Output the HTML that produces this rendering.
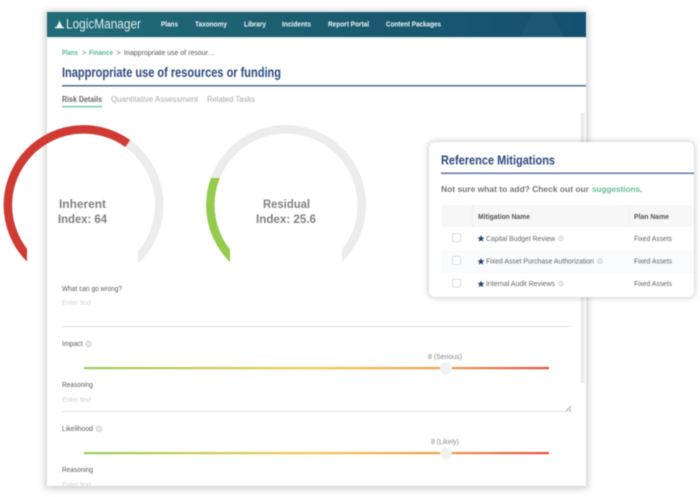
<!DOCTYPE html>
<html lang="en">
<head>
<meta charset="utf-8">
<title>LogicManager</title>
<style>
html,body{margin:0;padding:0;width:700px;height:497px;overflow:hidden;background:#fff}
#w{position:relative;width:700px;height:497px;filter:blur(.5px)}
#card{position:absolute;left:47px;top:12px;width:539px;height:474px;background:#fff;box-shadow:0 1px 7px 2px rgba(0,0,0,.2)}
#panel{position:absolute;left:429px;top:142px;width:265px;height:155px;background:#fff;border-radius:6px;box-shadow:0 0 6px 1px rgba(0,0,0,.2)}
svg{position:absolute;left:0;top:0}
text{font-family:"Liberation Sans",sans-serif}
</style>
</head>
<body>
<div id="w">
<div id="card"></div>
<svg width="700" height="497" viewBox="0 0 700 497" style="z-index:1">
<defs>
<linearGradient id="h" x1="0" x2="1" y1="0" y2="0"><stop offset="0" stop-color="#226c79"/><stop offset=".5" stop-color="#1b5d70"/><stop offset="1" stop-color="#135070"/></linearGradient>
<linearGradient id="s" x1="0" x2="1" y1="0" y2="0"><stop offset="0" stop-color="#9ccd56"/><stop offset=".5" stop-color="#f6c84f"/><stop offset=".78" stop-color="#f09a48"/><stop offset="1" stop-color="#e8493f"/></linearGradient>
<clipPath id="c"><rect x="47" y="12" width="539" height="474"/></clipPath>
<clipPath id="g1"><path d="M0 110H180V262H138V235H27V262H0z"/></clipPath>
<clipPath id="g2"><path d="M190 110H380V262H342V235H230V262H190z"/></clipPath>
<clipPath id="g3"><path d="M190 178H230V262H190z"/></clipPath>
<g id="i"><circle r="2.500" fill="none" stroke="#bbb" stroke-width=".9"/><circle r=".8" fill="#bbb"/></g>
</defs>
<rect x="47" y="12" width="539" height="25" fill="url(#h)"/>
<path d="M520 37L533 12h18l13 25z" fill="#fff" opacity=".035"/>
<rect x="47" y="37" width="539" height="1" fill="#dfe8ea"/>
<path d="M59.500 20.500l3 6.500h-6z" fill="#eef5f5"/><rect x="55" y="27" width="9" height="1.300" fill="#eef5f5"/>
<text x="66" y="28.500" font-size="13.500" fill="#dfecee" textLength="75" lengthAdjust="spacingAndGlyphs">LogicManager</text>
<g font-size="7" font-weight="700" fill="#f2f7f8">
<text x="161" y="26.500" textLength="17" lengthAdjust="spacingAndGlyphs">Plans</text>
<text x="195" y="26.500" textLength="32" lengthAdjust="spacingAndGlyphs">Taxonomy</text>
<text x="244" y="26.500" textLength="22" lengthAdjust="spacingAndGlyphs">Library</text>
<text x="282" y="26.500" textLength="29" lengthAdjust="spacingAndGlyphs">Incidents</text>
<text x="328" y="26.500" textLength="41" lengthAdjust="spacingAndGlyphs">Report Portal</text>
<text x="386" y="26.500" textLength="55" lengthAdjust="spacingAndGlyphs">Content Packages</text>
</g>
<g font-size="7.500">
<text x="62" y="55" fill="#55bb95" font-weight="700" textLength="16" lengthAdjust="spacingAndGlyphs">Plans</text>
<text x="82" y="55" fill="#777">&gt;</text>
<text x="89" y="55" fill="#55bb95" font-weight="700" textLength="24" lengthAdjust="spacingAndGlyphs">Finance</text>
<text x="116.500" y="55" fill="#777">&gt;</text>
<text x="124" y="55" fill="#555" textLength="91" lengthAdjust="spacingAndGlyphs">Inappropriate use of resour…</text>
</g>
<text x="62" y="77" font-size="13.500" font-weight="700" fill="#2c4a7c" textLength="219" lengthAdjust="spacingAndGlyphs">Inappropriate use of resources or funding</text>
<rect x="62" y="85" width="524" height="1.500" fill="#4a6a9a"/>
<text x="62" y="102" font-size="8" font-weight="700" fill="#666" textLength="40" lengthAdjust="spacingAndGlyphs">Risk Details</text>
<text x="111" y="102" font-size="8" fill="#aaa" textLength="87" lengthAdjust="spacingAndGlyphs">Quantitative Assessment</text>
<text x="207" y="102" font-size="8" fill="#aaa" textLength="48" lengthAdjust="spacingAndGlyphs">Related Tasks</text>
<rect x="62" y="106" width="40" height="1.300" fill="#5fc29f"/>
<rect x="580.500" y="113" width="4" height="270" fill="#ececec"/>

<g fill="none" stroke-width="8.500">
<g clip-path="url(#g1)">
<circle cx="83.500" cy="205" r="75.750" stroke="#ececec"/>
<path d="M33.500 261.900A75.750 75.750 0 0 1 127.700 143.500" stroke="#cf3a33"/>
</g>
<g clip-path="url(#g2)">
<circle cx="286" cy="205" r="75.750" stroke="#ececec"/>
</g>
<g clip-path="url(#g3)">
<path d="M236 261.900A75.750 75.750 0 0 1 218.800 170.300" stroke="#95cb4d"/>
</g>
</g>
<g font-size="12" font-weight="700" fill="#808080">
<text x="59" y="208" textLength="47" lengthAdjust="spacingAndGlyphs">Inherent</text>
<text x="58" y="223" textLength="49" lengthAdjust="spacingAndGlyphs">Index: 64</text>
<text x="263" y="208" textLength="47" lengthAdjust="spacingAndGlyphs">Residual</text>
<text x="256" y="223" textLength="60" lengthAdjust="spacingAndGlyphs">Index: 25.6</text>
</g>

<g clip-path="url(#c)">
<g font-size="7.500" fill="#5c5c5c">
<text x="62" y="291" textLength="60" lengthAdjust="spacingAndGlyphs">What can go wrong?</text>
<text x="62" y="346" textLength="21" lengthAdjust="spacingAndGlyphs">Impact</text>
<text x="62" y="387" textLength="31" lengthAdjust="spacingAndGlyphs">Reasoning</text>
<text x="62" y="431" textLength="31" lengthAdjust="spacingAndGlyphs">Likelihood</text>
<text x="62" y="472" textLength="31" lengthAdjust="spacingAndGlyphs">Reasoning</text>
<text x="428" y="359" fill="#888" textLength="34" lengthAdjust="spacingAndGlyphs">8 (Serious)</text>
<text x="431" y="444" fill="#888" textLength="28" lengthAdjust="spacingAndGlyphs">8 (Likely)</text>
</g>
<g font-size="7.500" fill="#d0d0d0">
<text x="62" y="305" textLength="29" lengthAdjust="spacingAndGlyphs">Enter text</text>
<text x="62" y="402" textLength="29" lengthAdjust="spacingAndGlyphs">Enter text</text>
<text x="62" y="487" textLength="29" lengthAdjust="spacingAndGlyphs">Enter text</text>
</g>
<use href="#i" x="88.500" y="344"/>
<use href="#i" x="99" y="429"/>
<rect x="62" y="326" width="510" height="1" fill="#e4e4e4"/>
<rect x="62" y="411" width="510" height="1" fill="#e4e4e4"/>
<path d="M566 411l5-5M569 411l2-2" stroke="#888" stroke-width=".7"/>
<rect x="84" y="367" width="465" height="2.200" fill="url(#s)"/>
<rect x="84" y="452" width="465" height="2.200" fill="url(#s)"/>
<circle cx="446" cy="368.500" r="6" fill="#f1f1f1"/>
<circle cx="446" cy="453.500" r="6" fill="#f1f1f1"/>
</g>
</svg>
<div id="panel" style="z-index:2"></div>
<svg width="700" height="497" viewBox="0 0 700 497" style="z-index:3">
<defs>
<g id="st"><path d="M0-3.400l1 2.300h2.500L1.600.5l.7 2.600L0 1.700-2.300 3.100l.7-2.600L-3.500-1.100H-1z" fill="#24407a"/></g>
<g id="j"><circle r="2.200" fill="none" stroke="#c4c4c4" stroke-width=".8"/><circle r=".7" fill="#c4c4c4"/></g>
</defs>
<text x="441" y="164.500" font-size="12.500" font-weight="700" fill="#2c4a7c" textLength="114" lengthAdjust="spacingAndGlyphs">Reference Mitigations</text>
<rect x="441" y="172.500" width="253" height="1.500" fill="#5a78a6"/>
<text x="441" y="192" font-size="8.500" font-weight="700" fill="#777" textLength="148" lengthAdjust="spacingAndGlyphs">Not sure what to add? Check out our</text>
<text x="592" y="192" font-size="8.500" font-weight="700" fill="#66bd98" textLength="48" lengthAdjust="spacingAndGlyphs">suggestions</text>
<text x="640" y="192" font-size="8.500" font-weight="700" fill="#777">.</text>
<rect x="441" y="205" width="253" height="22" fill="#f7f7f7"/>
<rect x="472" y="205" width="1" height="22" fill="#eee"/>
<rect x="629" y="205" width="1" height="22" fill="#f0f0f0"/>
<rect x="441" y="251" width="253" height="22" fill="#f9fbfc"/>
<text x="478" y="219" font-size="7.500" font-weight="700" fill="#555" textLength="52" lengthAdjust="spacingAndGlyphs">Mitigation Name</text>
<text x="634" y="219" font-size="7.500" font-weight="700" fill="#555" textLength="35" lengthAdjust="spacingAndGlyphs">Plan Name</text>
<g fill="#fff" stroke="#ddd" stroke-width="1">
<rect x="452.500" y="233.500" width="8" height="8" rx="1.500"/>
<rect x="452.500" y="256.500" width="8" height="8" rx="1.500"/>
<rect x="452.500" y="279" width="8" height="8" rx="1.500"/>
</g>
<use href="#st" x="481" y="238.500"/>
<use href="#st" x="481" y="261.500"/>
<use href="#st" x="481" y="284"/>
<g font-size="7.500" fill="#666">
<text x="486" y="241" textLength="69" lengthAdjust="spacingAndGlyphs">Capital Budget Review</text>
<text x="486" y="263.500" textLength="108" lengthAdjust="spacingAndGlyphs">Fixed Asset Purchase Authorization</text>
<text x="486" y="286" textLength="69" lengthAdjust="spacingAndGlyphs">Internal Audit Reviews</text>
<text x="634" y="241" textLength="38" lengthAdjust="spacingAndGlyphs">Fixed Assets</text>
<text x="634" y="263.500" textLength="38" lengthAdjust="spacingAndGlyphs">Fixed Assets</text>
<text x="634" y="286" textLength="38" lengthAdjust="spacingAndGlyphs">Fixed Assets</text>
</g>
<use href="#j" x="561" y="238.500"/>
<use href="#j" x="600" y="261"/>
<use href="#j" x="561" y="283.500"/>
</svg>
</div>
</body>
</html>
